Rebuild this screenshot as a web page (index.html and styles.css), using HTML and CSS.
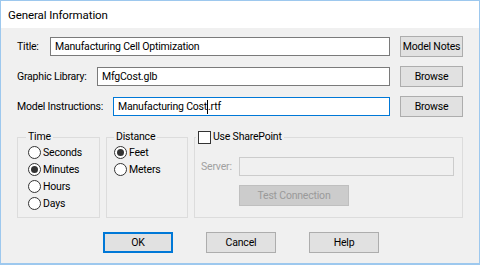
FILE: index.html
```html
<!DOCTYPE html>
<html>
<head>
<meta charset="utf-8">
<link rel="stylesheet" href="styles.css">
</head>
<body>
<div class="dialog">
  <div class="titlebar">General Information</div>
  <div class="content">
    <div class="row">
      <span class="lbl lbl-title">Title:</span>
      <div class="textbox">Manufacturing Cell Optimization</div>
      <button class="btn btn-side">Model Notes</button>
    </div>
    <div class="row">
      <span class="lbl lbl-lib">Graphic Library:</span>
      <div class="textbox">MfgCost.glb</div>
      <button class="btn btn-side">Browse</button>
    </div>
    <div class="row">
      <span class="lbl lbl-instr">Model Instructions:</span>
      <div class="textbox focus"><span>Manufacturing Cost</span><span class="caret"></span><span>.rtf</span></div>
      <button class="btn btn-side">Browse</button>
    </div>
    <div class="groups">
      <fieldset class="group group-time">
        <legend>Time</legend>
        <div class="radio"><span class="dot"></span>Seconds</div>
        <div class="radio"><span class="dot checked"></span>Minutes</div>
        <div class="radio"><span class="dot"></span>Hours</div>
        <div class="radio"><span class="dot"></span>Days</div>
      </fieldset>
      <fieldset class="group group-dist">
        <legend>Distance</legend>
        <div class="radio"><span class="dot checked"></span>Feet</div>
        <div class="radio"><span class="dot"></span>Meters</div>
      </fieldset>
      <fieldset class="group group-sp">
        <legend><span class="check"></span>Use SharePoint</legend>
        <div class="server-row">
          <span class="lbl lbl-server">Server:</span>
          <div class="textbox disabled"></div>
        </div>
        <button class="btn btn-test" disabled>Test Connection</button>
      </fieldset>
    </div>
    <div class="actions">
      <button class="btn btn-action btn-default">OK</button>
      <button class="btn btn-action">Cancel</button>
      <button class="btn btn-action">Help</button>
    </div>
  </div>
</div>
</body>
</html>
```
FILE: styles.css
```css
* { box-sizing: border-box; }
html, body { margin: 0; padding: 0; }
body {
  width: 480px;
  height: 265px;
  overflow: hidden;
  background: #f0f0f0;
  font-family: Roboto, "Liberation Sans", sans-serif;
  font-size: 10.5px;
  letter-spacing: -0.2px;
  color: #000;
}
.dialog {
  width: 480px;
  height: 265px;
  border: 1px solid #9dc8ee;
  border-bottom-width: 2px;
  background: #f0f0f0;
  display: flex;
  flex-direction: column;
}
.titlebar {
  height: 27px;
  flex: none;
  background: #fff;
  padding-left: 7px;
  font-size: 11.5px;
  letter-spacing: -0.1px;
  display: flex;
  align-items: center;
}
.content {
  padding: 8px 16px 0 16px;
  display: flex;
  flex-direction: column;
}
.row {
  display: flex;
  align-items: center;
  height: 21px;
  margin-bottom: 9px;
}
.row:nth-child(3) { margin-bottom: 0; }
.lbl { flex: none; white-space: nowrap; }
.lbl-title { width: 33px; }
.lbl-lib { width: 80px; }
.lbl-instr { width: 96px; }
.textbox {
  flex: 1;
  height: 19px;
  border: 1px solid #7a7a7a;
  background: #fff;
  padding: 0 4px;
  display: flex;
  align-items: center;
  white-space: nowrap;
}
.textbox.focus { border-color: #0078d7; }
.textbox.disabled { border-color: #cccccc; background: #f0f0f0; }
.caret {
  display: inline-block;
  width: 1px;
  height: 14px;
  background: #000;
}
.btn {
  font: inherit;
  letter-spacing: inherit;
  color: #000;
  background: #e1e1e1;
  border: 1px solid #adadad;
  padding: 0;
  margin: 0;
  white-space: nowrap;
}
.btn-side {
  flex: none;
  width: 63px;
  height: 21px;
  margin-left: 10px;
}
.groups {
  display: flex;
  gap: 6px;
  margin-top: 13px;
  height: 88px;
}
fieldset.group {
  margin: 0;
  border: 1px solid #dcdcdc;
  min-width: 0;
  padding: 0;
}
.group legend {
  padding: 0 2px;
  height: 14px;
  line-height: 14px;
}
.group-time { width: 83px; flex: none; padding-left: 10px !important; }
.group-time legend { margin-left: -2px; }
.group-dist { width: 82px; flex: none; padding-left: 7px !important; }
.radio {
  display: flex;
  align-items: center;
  height: 17px;
}
.dot {
  width: 13px;
  height: 13px;
  border: 1px solid #333;
  border-radius: 50%;
  background: #fff;
  margin-right: 2px;
  display: flex;
  align-items: center;
  justify-content: center;
}
.dot.checked::after {
  content: "";
  width: 7px;
  height: 7px;
  border-radius: 50%;
  background: #333;
}
.group-sp {
  flex: 1;
  padding: 0 8px 0 6px !important;
}
.group-sp legend {
  margin-left: -5px;
  display: flex;
  align-items: center;
}
.check {
  width: 13px;
  height: 13px;
  border: 1px solid #333;
  background: #fff;
  margin-right: 2px;
}
.server-row {
  display: flex;
  align-items: center;
  margin-top: 13px;
}
.lbl-server { width: 38px; color: #a0a0a0; }
.btn-test {
  display: block;
  width: 110px;
  height: 21px;
  margin: 9px 0 0 38px;
  background: #cccccc;
  border-color: #bfbfbf;
  color: #9a9a9a;
}
.actions {
  display: flex;
  justify-content: center;
  gap: 33px;
  margin-top: 14px;
  padding-left: 2px;
}
.btn-action { width: 70px; height: 21px; }
.btn-default { border: 2px solid #0078d7; }
```
